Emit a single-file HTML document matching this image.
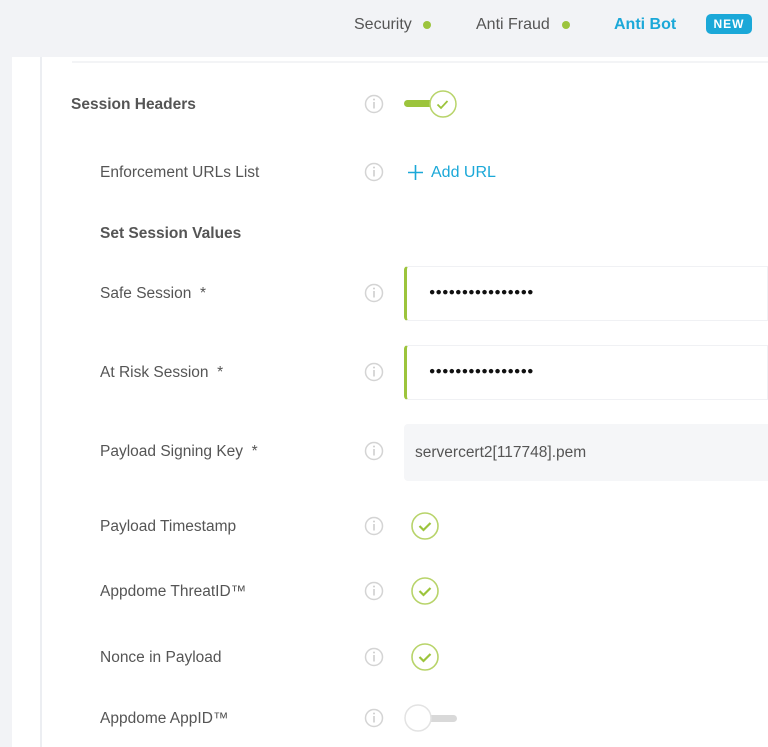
<!DOCTYPE html>
<html><head><meta charset="utf-8"><style>
*{margin:0;padding:0;box-sizing:border-box}
body{width:768px;height:747px;background:#f2f3f6;font-family:"Liberation Sans",sans-serif;color:#555;position:relative;overflow:hidden}
.a{position:absolute;white-space:nowrap}
.panel{position:absolute;left:12px;top:57px;width:756px;height:690px;background:#fff}
.vl{position:absolute;left:40px;top:57px;width:2px;height:690px;background:#eceef2}
.hl{position:absolute;left:72px;top:61px;width:696px;height:2px;background:#f3f4f6}
.lab{font-size:15.5px;line-height:20px;color:#555}
.b{font-weight:bold}
.inp{position:absolute;left:404px;width:364px;height:55px;background:#fff;border:1px solid #f0f1f4;border-left:3px solid #9cc43c;border-radius:4px 0 0 4px}
.dots{position:absolute;left:22px;top:19px;font-size:10.5px;letter-spacing:0.2px;color:#111;font-weight:bold}
.gray{position:absolute;left:404px;top:424px;width:364px;height:57px;background:#f5f6f8;border-radius:4px 0 0 4px}
</style></head><body>
<div class="a" style="left:354px;top:16px;font-size:16px;color:#555">Security</div>
<div class="a" style="left:423px;top:21px;width:8px;height:8px;border-radius:50%;background:#9cc43c"></div>
<div class="a" style="left:476px;top:16px;font-size:16px;color:#555">Anti Fraud</div>
<div class="a" style="left:562px;top:21px;width:8px;height:8px;border-radius:50%;background:#9cc43c"></div>
<div class="a" style="left:614px;top:16px;font-size:16px;color:#1ba8d8;font-weight:bold">Anti Bot</div>
<div class="a" style="left:706px;top:14px;width:46px;height:20px;border-radius:5px;background:#1ba8d8;color:#fff;font-size:12px;font-weight:bold;text-align:center;line-height:20px;letter-spacing:1px">NEW</div>
<div class="panel"></div><div class="vl"></div><div class="hl"></div>

<div class="a lab b" style="left:71px;top:95px">Session Headers</div>
<div class="a lab" style="left:100px;top:163px">Enforcement URLs List</div>
<div class="a lab b" style="left:100px;top:224px">Set Session Values</div>
<div class="a lab" style="left:100px;top:284px">Safe Session &nbsp;*</div>
<div class="a lab" style="left:100px;top:363px">At Risk Session &nbsp;*</div>
<div class="a lab" style="left:100px;top:442px">Payload Signing Key &nbsp;*</div>
<div class="a lab" style="left:100px;top:517px">Payload Timestamp</div>
<div class="a lab" style="left:100px;top:582px">Appdome ThreatID™</div>
<div class="a lab" style="left:100px;top:648px">Nonce in Payload</div>
<div class="a lab" style="left:100px;top:709px">Appdome AppID™</div>

<svg class="a" style="left:0;top:0" width="768" height="747">
<g fill="none" stroke="#d4d4d4" stroke-width="1.5">
<circle cx="374" cy="104" r="8.5"/><circle cx="374" cy="172" r="8.5"/><circle cx="374" cy="293" r="8.5"/><circle cx="374" cy="372" r="8.5"/><circle cx="374" cy="451" r="8.5"/><circle cx="374" cy="526" r="8.5"/><circle cx="374" cy="591" r="8.5"/><circle cx="374" cy="657" r="8.5"/><circle cx="374" cy="718" r="8.5"/>
</g>
<g fill="#cfcfcf">
<rect x="373.2" y="102" width="1.6" height="6.5"/><circle cx="374" cy="99.5" r="1"/>
<rect x="373.2" y="170" width="1.6" height="6.5"/><circle cx="374" cy="167.5" r="1"/>
<rect x="373.2" y="291" width="1.6" height="6.5"/><circle cx="374" cy="288.5" r="1"/>
<rect x="373.2" y="370" width="1.6" height="6.5"/><circle cx="374" cy="367.5" r="1"/>
<rect x="373.2" y="449" width="1.6" height="6.5"/><circle cx="374" cy="446.5" r="1"/>
<rect x="373.2" y="524" width="1.6" height="6.5"/><circle cx="374" cy="521.5" r="1"/>
<rect x="373.2" y="589" width="1.6" height="6.5"/><circle cx="374" cy="586.5" r="1"/>
<rect x="373.2" y="655" width="1.6" height="6.5"/><circle cx="374" cy="652.5" r="1"/>
<rect x="373.2" y="716" width="1.6" height="6.5"/><circle cx="374" cy="713.5" r="1"/>
</g>
<rect x="404" y="100" width="38" height="7" rx="3.5" fill="#9cc43c"/>
<circle cx="443" cy="104" r="13" fill="#fff" stroke="#b8d46a" stroke-width="1.5"/>
<path d="M437.5 104.5l3.5 3.5 6.5-7" fill="none" stroke="#9cc43c" stroke-width="1.8"/>
<path d="M415.5 165v15M408 172.5h15" stroke="#1ba8d8" stroke-width="1.6"/>
<g fill="none" stroke-width="1.6">
<circle cx="425" cy="526" r="13" stroke="#b8d46a"/><path d="M419.5 526l4 4 7-7" stroke="#9cc43c" stroke-width="2.2"/>
<circle cx="425" cy="591" r="13" stroke="#b8d46a"/><path d="M419.5 591l4 4 7-7" stroke="#9cc43c" stroke-width="2.2"/>
<circle cx="425" cy="657" r="13" stroke="#b8d46a"/><path d="M419.5 657l4 4 7-7" stroke="#9cc43c" stroke-width="2.2"/>
</g>
<rect x="420" y="715" width="37" height="7" rx="3.5" fill="#d9d9d9"/>
<circle cx="418" cy="718" r="13" fill="#fff" stroke="#e3e3e3" stroke-width="1.5"/>
</svg>
<div class="a" style="left:431px;top:164px;font-size:16px;color:#1ba8d8">Add URL</div>

<div class="inp" style="top:266px"><div class="dots">●●●●●●●●●●●●●●●●</div></div>
<div class="inp" style="top:345px"><div class="dots">●●●●●●●●●●●●●●●●</div></div>
<div class="gray"><div class="a" style="left:11px;top:20px;font-size:15.5px;color:#555">servercert2[117748].pem</div></div>
</body></html>
